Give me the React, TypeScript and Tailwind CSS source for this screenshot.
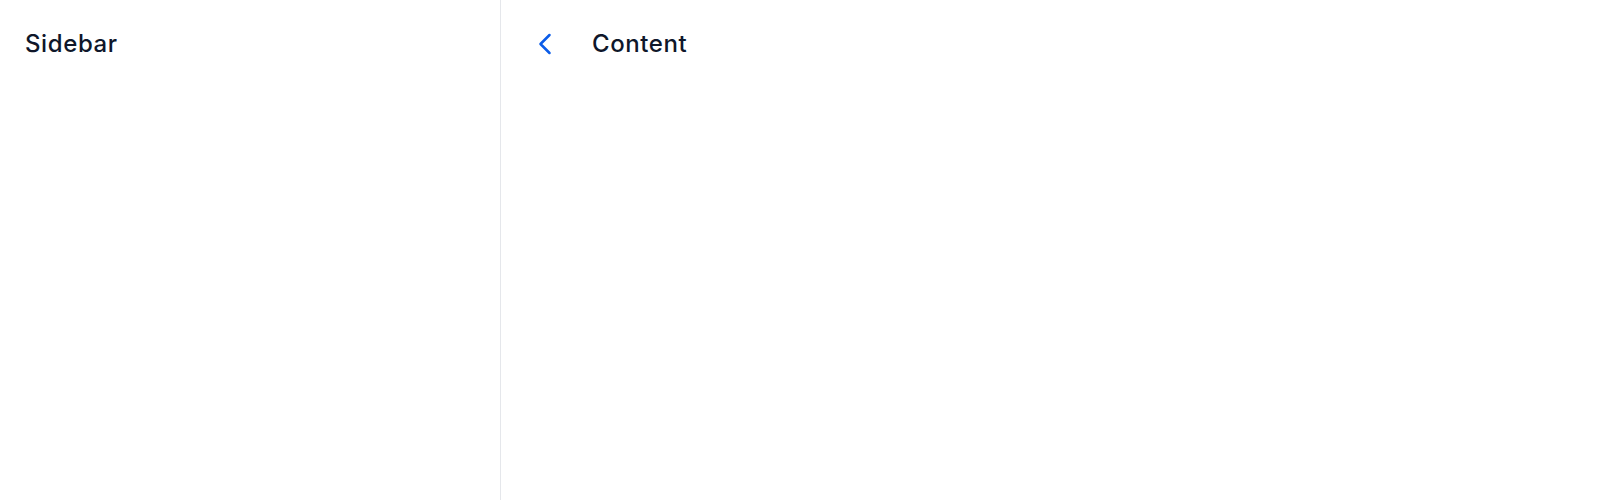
import React from 'react';
import { ChevronLeft } from 'lucide-react';

const App: React.FC = () => {
    return (
        <div className="flex h-[500px] w-full bg-white font-['Inter',sans-serif] text-[#0f172a]">
            {/* Sidebar */}
            <aside className="w-[501px] shrink-0 border-r border-[#e5e7eb]">
                <div className="flex h-[88px] items-center px-[25px]">
                    <h2 className="text-[24px] font-medium tracking-[0.025em]">Sidebar</h2>
                </div>
            </aside>

            {/* Content */}
            <main className="flex-1">
                <div className="flex h-[88px] items-center gap-[27px] pl-[24px]">
                    <button className="flex h-[40px] w-[40px] items-center justify-center text-[#0b5ce8]">
                        <ChevronLeft size={36} strokeWidth={1.7} />
                    </button>
                    <h2 className="text-[24px] font-medium tracking-[0.025em]">Content</h2>
                </div>
            </main>
        </div>
    );
};

export default App;
